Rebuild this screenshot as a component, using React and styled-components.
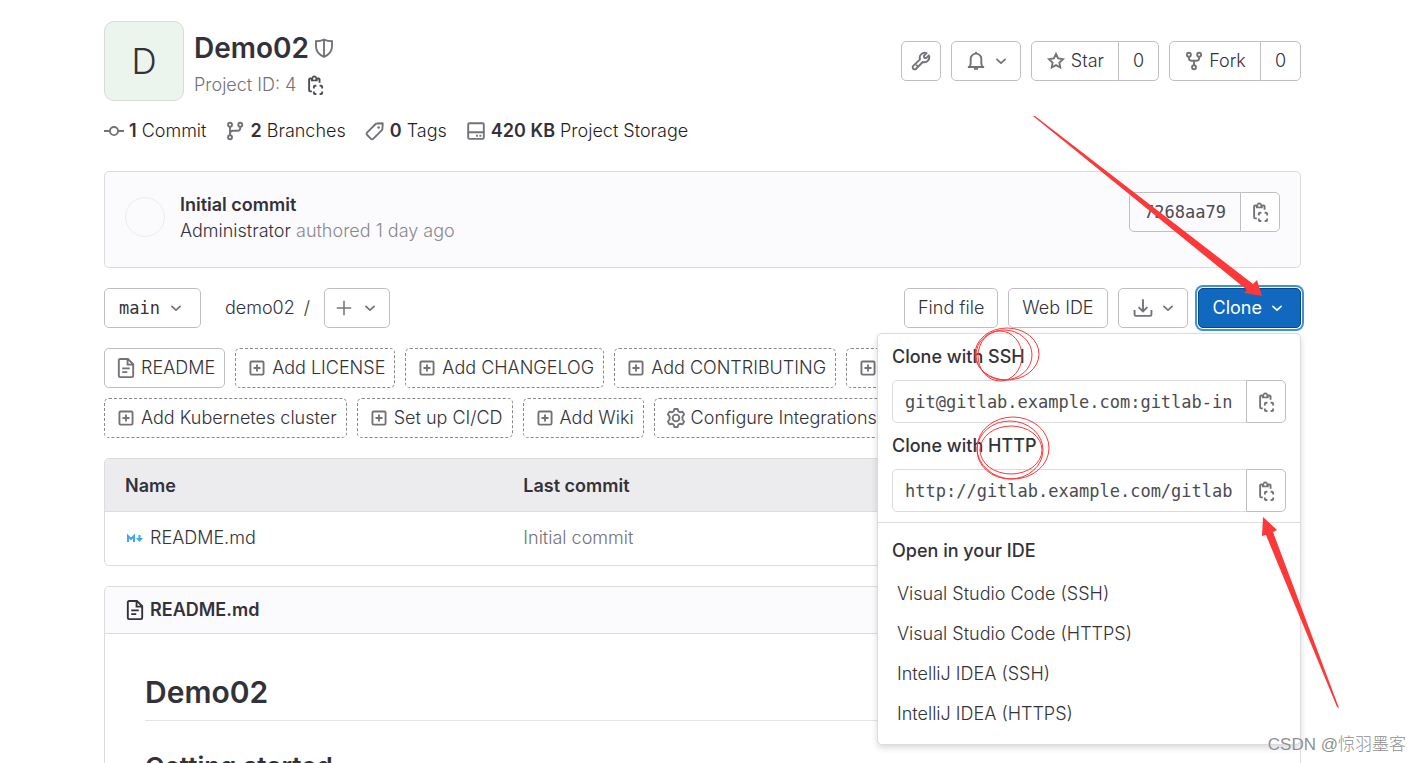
import React from 'react'
import styled, { createGlobalStyle } from 'styled-components'

const sans = 'Inter, "Noto Sans", "Noto Sans CJK SC", sans-serif'
const mono = '"DejaVu Sans Mono", "Liberation Mono", monospace'

const GlobalStyle = createGlobalStyle`
  * {
    box-sizing: border-box;
  }

  body {
    margin: 0;
    background: #fff;
    color: #333238;
    font-family: ${sans};
    font-size: 18px;
    font-weight: 300;
    line-height: 24px;
  }

  button,
  input {
    font: inherit;
    color: inherit;
  }

  a {
    color: inherit;
    text-decoration: none;
  }
`

const Page = styled.main`
  position: relative;
  height: 100vh;
  padding: 21px 121px 0 104px;
  overflow: hidden;
`

const Svg = styled.svg`
  flex: none;
  width: ${props => props.$size || 20}px;
  height: ${props => props.$size || 20}px;
  fill: none;
  stroke: ${props => props.$color || '#737278'};
  stroke-width: 1.5;
`

const ProjectHeader = styled.header`
  display: flex;
  align-items: flex-start;
  gap: 10px;
`

const ProjectAvatar = styled.div`
  display: flex;
  align-items: center;
  justify-content: center;
  width: 80px;
  height: 80px;
  background: #ecf4ee;
  border: 1px solid #d5ddd7;
  border-radius: 10px;
  font-size: 35px;
`

const ProjectInfo = styled.div`
  flex: 1;
  padding-top: 9px;
`

const TitleLine = styled.div`
  display: flex;
  align-items: center;
  gap: 5px;
`

const ProjectTitle = styled.h1`
  margin: 0;
  font-size: 28px;
  font-weight: 600;
  line-height: 36px;
`

const ProjectId = styled.div`
  display: flex;
  align-items: center;
  gap: 9px;
  margin-top: 7px;
  color: #737278;
`

const IconButton = styled.button`
  display: flex;
  padding: 0;
  background: none;
  border: none;
  cursor: pointer;
`

const Actions = styled.div`
  display: flex;
  gap: 10px;
  padding-top: ${props => (props.$top ? 20 : 0)}px;
`

const Button = styled.button`
  display: flex;
  align-items: center;
  justify-content: center;
  gap: ${props => props.$gap || 5}px;
  min-width: 40px;
  height: 40px;
  padding: ${props => props.$padding || '0 13px'};
  background: #fff;
  border: 1px solid #bfbfc3;
  border-radius: 5px;
  white-space: nowrap;
  cursor: pointer;
`

const BranchButton = styled(Button)`
  font-family: ${mono};
  font-size: 17px;
`

const CloneButton = styled(Button)`
  background: #1068bf;
  border-color: #064787;
  box-shadow: 0 0 0 1px #fff, 0 0 0 3px #428fdc;
  color: #fff;
  font-weight: 400;
`

const Group = styled.div`
  display: flex;

  & > :first-child {
    border-radius: 5px 0 0 5px;
  }

  & > :last-child {
    margin-left: -1px;
    border-radius: 0 5px 5px 0;
  }
`

const Stats = styled.nav`
  display: flex;
  gap: 19px;
  margin-top: 18px;
`

const Stat = styled.a`
  display: flex;
  align-items: center;
  gap: 5px;
  color: #1f1e24;

  strong {
    color: #333238;
    font-weight: 600;
  }
`

const CommitBox = styled.section`
  display: flex;
  align-items: flex-start;
  gap: 15px;
  margin-top: 28px;
  padding: 20px 20px 23px;
  background: #fbfafd;
  border: 1px solid #dcdcde;
  border-radius: 5px;
`

const UserAvatar = styled.div`
  width: 40px;
  height: 40px;
  margin-top: 5px;
  border: 1px solid #ececef;
  border-radius: 50%;
`

const CommitText = styled.div`
  flex: 1;
  color: #89888d;
  line-height: 26px;

  a {
    color: #333238;
  }
`

const CommitTitle = styled.a`
  display: block;
  font-weight: 600;
`

const CommitSha = styled.span`
  display: flex;
  align-items: center;
  height: 40px;
  padding: 0 14px;
  border: 1px solid #bfbfc3;
  color: #4c4b51;
  font-family: ${mono};
  font-size: 17px;
`

const TreeBar = styled.div`
  display: flex;
  align-items: center;
  justify-content: space-between;
  margin-top: 20px;
`

const Breadcrumb = styled.div`
  display: flex;
  align-items: center;
`

const Path = styled.span`
  display: flex;
  gap: 9px;
  padding: 0 14px 0 24px;
`

const QuickActions = styled.div`
  display: flex;
  flex-wrap: wrap;
  gap: 10px;
  margin-top: 20px;
`

const QuickAction = styled.a`
  display: flex;
  align-items: center;
  gap: 5px;
  height: 40px;
  padding: 0 9px 0 11px;
  border: 1px ${props => (props.$solid ? 'solid #bfbfc3' : 'dashed #89888d')};
  border-radius: 5px;
  white-space: nowrap;
`

const TableFrame = styled.div`
  margin-top: 20px;
  border: 1px solid #dcdcde;
  border-radius: 5px;
  overflow: hidden;
`

const FileTable = styled.table`
  width: 100%;
  table-layout: fixed;
  border-collapse: collapse;

  th,
  td {
    padding: 0 20px;
    text-align: left;
  }

  th {
    height: 52px;
    padding-top: 2px;
    background: #ececef;
    border-bottom: 1px solid #dcdcde;
    font-weight: 600;
  }

  td {
    height: 54px;
    color: #737278;
  }

  th:last-child,
  td:last-child {
    text-align: right;
  }
`

const FileLink = styled.a`
  display: flex;
  align-items: center;
  gap: 5px;
  color: #333238;
`

const Readme = styled.article`
  margin-top: 20px;
  border: 1px solid #dcdcde;
  border-radius: 5px;
`

const ReadmeHeader = styled.div`
  display: flex;
  align-items: center;
  gap: 5px;
  height: 47px;
  padding: 0 20px;
  background: #fbfafd;
  border-bottom: 1px solid #dcdcde;
  border-radius: 5px 5px 0 0;
  font-weight: 600;
`

const ReadmeBody = styled.div`
  padding: 40px;

  h1,
  h2 {
    margin: 0;
    font-weight: 600;
  }

  h1 {
    padding-bottom: 10px;
    border-bottom: 1px solid #e3e3e8;
    font-size: 30px;
    line-height: 36px;
  }

  h2 {
    margin-top: 30px;
    font-size: 26px;
    line-height: 32px;
  }
`

const CloneDropdown = styled.div`
  position: relative;
`

const Menu = styled.div`
  position: absolute;
  top: 45px;
  right: 0;
  z-index: 2;
  width: 424px;
  background: #fff;
  border: 1px solid #dcdcde;
  border-radius: 5px;
  box-shadow: 0 3px 6px rgba(0, 0, 0, 0.15);
`

const CloneUrls = styled.div`
  display: flex;
  flex-direction: column;
  gap: 11px;
  padding: 11px 14px 10px;
  border-bottom: 1px solid #dcdcde;
`

const MenuLabel = styled.label`
  display: block;
  font-weight: 500;
`

const UrlInput = styled.input`
  flex: 1;
  min-width: 0;
  height: 43px;
  padding: 0 12px;
  background: #fff;
  border: 1px solid #dcdcde;
  outline: none;
  color: #4c4b51;
  font-family: ${mono};
  font-size: 17px;
`

const CopyUrl = styled(Button)`
  height: 43px;
`

const IdeSection = styled.div`
  padding: 16px 14px 10px;
`

const IdeTitle = styled.div`
  font-weight: 500;
`

const IdeList = styled.ul`
  margin: 11px 0 0;
  padding: 0 5px;
  list-style: none;
  line-height: 40px;
`

const Annotations = styled.svg`
  position: absolute;
  top: 0;
  left: 0;
  z-index: 3;
  width: 1422px;
  height: 763px;
  fill: #fd3838;
  pointer-events: none;

  ellipse {
    fill: none;
    stroke: #fd3838;
  }
`

const Watermark = styled.div`
  position: absolute;
  right: 16px;
  bottom: 6px;
  z-index: 4;
  color: #8f8f92;
  font-family: "Liberation Sans", "Noto Sans CJK SC", sans-serif;
  font-size: 17px;
  text-shadow: 0 0 1px #fff;
`

const paths = {
  shield: <path d="M8 1.300c2 .9 4 1.300 6.400 1.300v3.900c0 4-2.700 6.900-6.400 8.600-3.700-1.700-6.400-4.600-6.400-8.600V2.600C4 2.600 6 2.200 8 1.300zM8 1.300v13.800" />,
  copy: (
    <>
      <path d="M5.250 2.750H4.100a.8.8 0 0 0-.8.8v8.700a.8.8 0 0 0 .8.8h1.400M9.700 2.750h1.150a.8.8 0 0 1 .8.8V6.200" />
      <path d="M5.400 4.400V3.100h.5a1.600 1.600 0 1 1 3.100 0h.5v1.300z" strokeWidth="1.300" />
      <path d="M7.100 10.700V9.400a.8.8 0 0 1 .8-.8h1.200M11.700 8.600h1.200a.8.8 0 0 1 .8.8v1.300M13.700 13.100v1.300a.8.8 0 0 1-.8.8h-1.200M9.100 15.200H7.900a.8.8 0 0 1-.8-.8v-1.300" />
    </>
  ),
  wrench: (
    <>
      <path d="M10.300 3.900 12.500 1.700A4 4 0 0 0 7.200 6.700l-5.400 5.200a1.600 1.600 0 0 0 2.300 2.300l5.300-5.400A4 4 0 0 0 14.300 3.500l-2.200 2.200-1.500-.3z" strokeLinejoin="round" />
      <path d="M4.400 11.500h.4" strokeLinecap="round" />
    </>
  ),
  bell: (
    <>
      <path d="M3 12.750h10L12.250 10V6.300a4.250 4.250 0 0 0-8.500 0V10z M1.500 12.750h13" />
      <path d="M6.400 14.200h3.200M8 .6v1.400" />
    </>
  ),
  star: <path d="m8 2.400 1.700 3.600 3.900.5-2.900 2.800.7 3.900L8 11.300l-3.400 1.900.7-3.900-2.900-2.800 3.900-.5z" />,
  fork: (
    <>
      <circle cx="3.900" cy="3" r="1.600" />
      <circle cx="12.100" cy="3" r="1.600" />
      <circle cx="8" cy="13" r="1.600" />
      <path d="M3.900 4.600v.9A2.300 2.300 0 0 0 6.200 7.800h3.600a2.300 2.300 0 0 0 2.300-2.300v-.9M8 7.800v3.600" />
    </>
  ),
  branch: (
    <>
      <circle cx="4" cy="3" r="1.600" />
      <circle cx="12.200" cy="3" r="1.600" />
      <circle cx="4" cy="13" r="1.600" />
      <path d="M4 4.600v6.800M12.200 4.600v.9A2.300 2.300 0 0 1 9.900 7.800H6.300A2.300 2.300 0 0 0 4 10.100" />
    </>
  ),
  commit: (
    <>
      <circle cx="8" cy="8" r="3.250" />
      <path d="M0 8h4.750M11.250 8H16" />
    </>
  ),
  tag: (
    <>
      <path d="M13.900 1.800 9.500 2a1.500 1.500 0 0 0-1 .4L1.600 9.300a1.200 1.200 0 0 0 0 1.700l3.200 3.300a1.200 1.200 0 0 0 1.700 0l7-7a1.500 1.500 0 0 0 .4-1L14.200 2.100z" />
      <circle cx="10.900" cy="5.100" r="1" fill="#737278" stroke="none" />
    </>
  ),
  disk: (
    <>
      <rect x="1.750" y="1.750" width="12.500" height="12.500" rx="1" />
      <path d="M1.750 9h12.500M8 11.750h1.500M10.750 11.750h1.500" />
    </>
  ),
  doc: (
    <>
      <path d="M9.500.75H3.250a1 1 0 0 0-1 1v12.500a1 1 0 0 0 1 1h9.500a1 1 0 0 0 1-1V5zM9.250.75V5.250h4.500" />
      <path d="M5 8.250h6M5 11.250h4" />
    </>
  ),
  addSquare: (
    <>
      <rect x="2.750" y="2.750" width="10.500" height="10.500" rx="1" />
      <path d="M8 5.200v5.600M5.200 8h5.600" />
    </>
  ),
  gear: (
    <>
      <path d="M6.700.8h2.600l.6 1.900 1.300.7 2-.5 1.300 2.300-1.300 1.500v2.600l1.300 1.500-1.300 2.300-2-.5-1.300.7-.6 1.900H6.700l-.6-1.900-1.300-.7-2 .5-1.300-2.300 1.300-1.500V6.700L1.500 5.200l1.300-2.300 2 .5 1.300-.7z" strokeLinejoin="round" />
      <circle cx="8" cy="8" r="2.700" />
    </>
  ),
  download: <path d="M1.250 9.500v3.750a1 1 0 0 0 1 1h11.500a1 1 0 0 0 1-1V9.500M8 1v9.500M4.500 7.250 8 10.750l3.500-3.500" />,
  plus: <path d="M8 .8v14.400M.8 8h14.400" />,
  chevron: <path d="M3.900 6.300 8 10.200l4.100-3.900" strokeWidth="1.700" strokeLinecap="round" strokeLinejoin="round" />
}

function Icon({ name, color, size }) {
  return (
    <Svg viewBox="0 0 16 16" $color={color} $size={size} aria-hidden="true">
      {paths[name]}
    </Svg>
  )
}

function MarkdownIcon() {
  return (
    <Svg viewBox="0 0 20 20" aria-hidden="true" $color="#42a5f5">
      <path d="M3 14V8l3 3 3-3v6" strokeWidth="2" />
      <path d="M13.500 7h2v3h2.500l-3.500 4-3.500-4h2.500z" fill="#42a5f5" stroke="none" />
    </Svg>
  )
}

const stats = [
  { icon: 'commit', count: '1', label: 'Commit' },
  { icon: 'branch', count: '2', label: 'Branches' },
  { icon: 'tag', count: '0', label: 'Tags' },
  { icon: 'disk', count: '420 KB', label: 'Project Storage' }
]

const quickActions = [
  { icon: 'doc', label: 'README', solid: true },
  { icon: 'addSquare', label: 'Add LICENSE' },
  { icon: 'addSquare', label: 'Add CHANGELOG' },
  { icon: 'addSquare', label: 'Add CONTRIBUTING' },
  { icon: 'addSquare', label: 'Enable Auto DevOps' },
  { icon: 'addSquare', label: 'Add Kubernetes cluster' },
  { icon: 'addSquare', label: 'Set up CI/CD' },
  { icon: 'addSquare', label: 'Add Wiki' },
  { icon: 'gear', label: 'Configure Integrations' }
]

const cloneUrls = [
  { id: 'ssh', label: 'Clone with SSH', url: 'git@gitlab.example.com:gitlab-instance/demo02.git' },
  { id: 'http', label: 'Clone with HTTP', url: 'http://gitlab.example.com/gitlab-instance/demo02.git' }
]

const ides = [
  'Visual Studio Code (SSH)',
  'Visual Studio Code (HTTPS)',
  'IntelliJ IDEA (SSH)',
  'IntelliJ IDEA (HTTPS)'
]

function CountButton({ icon, label, count }) {
  return (
    <Group>
      <Button $padding="0 14px">
        <Icon name={icon} />
        {label}
      </Button>
      <Button $padding="0 14px">{count}</Button>
    </Group>
  )
}

function CloneMenu() {
  return (
    <Menu>
      <CloneUrls>
        {cloneUrls.map(({ id, label, url }) => (
          <React.Fragment key={id}>
            <MenuLabel htmlFor={id}>{label}</MenuLabel>
            <Group>
              <UrlInput id={id} defaultValue={url} readOnly />
              <CopyUrl $padding="0" aria-label="Copy URL">
                <Icon name="copy" />
              </CopyUrl>
            </Group>
          </React.Fragment>
        ))}
      </CloneUrls>
      <IdeSection>
        <IdeTitle>Open in your IDE</IdeTitle>
        <IdeList>
          {ides.map(ide => (
            <li key={ide}>
              <a href="#ide">{ide}</a>
            </li>
          ))}
        </IdeList>
      </IdeSection>
    </Menu>
  )
}

function App() {
  return (
    <>
      <GlobalStyle />
      <Page>
        <ProjectHeader>
          <ProjectAvatar>D</ProjectAvatar>
          <ProjectInfo>
            <TitleLine>
              <ProjectTitle>Demo02</ProjectTitle>
              <Icon name="shield" />
            </TitleLine>
            <ProjectId>
              Project ID: 4
              <IconButton aria-label="Copy project ID">
                <Icon name="copy" color="#4c4b51" />
              </IconButton>
            </ProjectId>
          </ProjectInfo>
          <Actions $top>
            <Button $padding="0" aria-label="Settings">
              <Icon name="wrench" />
            </Button>
            <Button $gap={7} $padding="0 11px 0 14px" aria-label="Notifications">
              <Icon name="bell" />
              <Icon name="chevron" size={16} />
            </Button>
            <CountButton icon="star" label="Star" count="0" />
            <CountButton icon="fork" label="Fork" count="0" />
          </Actions>
        </ProjectHeader>

        <Stats>
          {stats.map(({ icon, count, label }) => (
            <Stat href="#stats" key={label}>
              <Icon name={icon} />
              <span>
                <strong>{count}</strong> {label}
              </span>
            </Stat>
          ))}
        </Stats>

        <CommitBox>
          <UserAvatar />
          <CommitText>
            <CommitTitle href="#commit">Initial commit</CommitTitle>
            <a href="#user">Administrator</a> authored 1 day ago
          </CommitText>
          <Group>
            <CommitSha>7268aa79</CommitSha>
            <Button $padding="0" aria-label="Copy commit SHA">
              <Icon name="copy" />
            </Button>
          </Group>
        </CommitBox>

        <TreeBar>
          <Breadcrumb>
            <BranchButton $gap={8} $padding="0 16px 0 14px">
              main
              <Icon name="chevron" size={16} />
            </BranchButton>
            <Path>
              <a href="#root">demo02</a>
              <span>/</span>
            </Path>
            <Button $gap={10} $padding="0 11px" aria-label="Add to tree">
              <Icon name="plus" size={16} />
              <Icon name="chevron" size={16} />
            </Button>
          </Breadcrumb>
          <Actions>
            <Button>Find file</Button>
            <Button>Web IDE</Button>
            <Button $gap={7} $padding="0 11px 0 14px" aria-label="Download">
              <Icon name="download" />
              <Icon name="chevron" size={16} />
            </Button>
            <CloneDropdown>
              <CloneButton $gap={7} $padding="0 15px 0 14px">
                Clone
                <Icon name="chevron" size={16} color="#fff" />
              </CloneButton>
              <CloneMenu />
            </CloneDropdown>
          </Actions>
        </TreeBar>

        <QuickActions>
          {quickActions.map(({ icon, label, solid }) => (
            <QuickAction href="#setup" key={label} $solid={solid}>
              <Icon name={icon} />
              {label}
            </QuickAction>
          ))}
        </QuickActions>

        <TableFrame>
          <FileTable>
            <thead>
              <tr>
                <th>Name</th>
                <th>Last commit</th>
                <th>Last update</th>
              </tr>
            </thead>
            <tbody>
              <tr>
                <td>
                  <FileLink href="#readme">
                    <MarkdownIcon />
                    README.md
                  </FileLink>
                </td>
                <td>Initial commit</td>
                <td>1 day ago</td>
              </tr>
            </tbody>
          </FileTable>
        </TableFrame>

        <Readme>
          <ReadmeHeader>
            <Icon name="doc" color="#333238" />
            README.md
          </ReadmeHeader>
          <ReadmeBody>
            <h1>Demo02</h1>
            <h2>Getting started</h2>
          </ReadmeBody>
        </Readme>

        <Annotations viewBox="0 0 1422 763" aria-hidden="true">
          <path d="M1033 116 1035 116 1253 284 1257 280 1262 296 1244 293 1247 290z" />
          <path d="M1263 517 1277 530 1273 532 1339 708 1337 707 1266 535 1262 536z" />
          <ellipse cx="1000" cy="356" rx="22" ry="25" />
          <ellipse cx="1004" cy="355" rx="28" ry="25" />
          <ellipse cx="1007" cy="354" rx="32" ry="26" />
          <ellipse cx="1011" cy="450" rx="31" ry="24" />
          <ellipse cx="1010" cy="450" rx="33" ry="29" />
          <ellipse cx="1013" cy="448" rx="36" ry="31" />
        </Annotations>
        <Watermark>CSDN @惊羽墨客</Watermark>
      </Page>
    </>
  )
}

export default App
